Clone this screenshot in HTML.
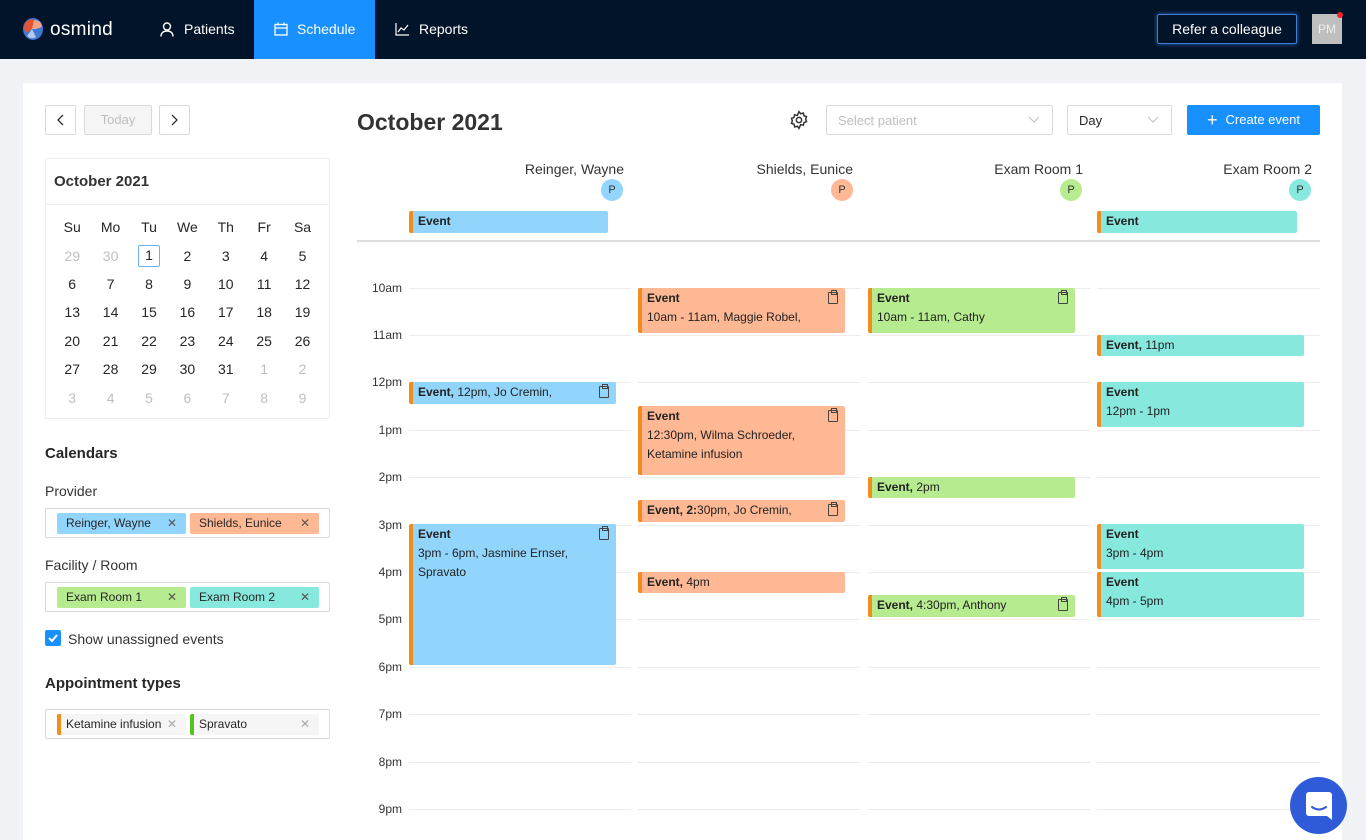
<!DOCTYPE html>
<html><head><meta charset="utf-8"><style>
*{box-sizing:border-box;margin:0;padding:0}
body{width:1366px;height:840px;overflow:hidden;background:#f0f2f5;font-family:"Liberation Sans",sans-serif;color:#262626;position:relative;font-size:13px}
.a{position:absolute}
.nav{left:0;top:0;width:1366px;height:59px;background:#021429}
.nav .it{position:absolute;top:0;height:59px;line-height:59px;color:#fff;font-size:14px}
.panel{left:23px;top:83px;width:1319px;height:757px;background:#fff}
.btn{border:1px solid #d9d9d9;border-radius:2px;background:#fff;height:30px;text-align:center;line-height:28px}
.cal td{width:38.4px;text-align:center;height:28.4px;font-size:14px;color:#262626}
.g{color:#bfbfbf!important}
.box{border:1px solid #d9d9d9;border-radius:2px;background:#fff}
.tag{position:absolute;top:4px;height:21px;line-height:21px;font-size:12px;padding-left:9px;border-radius:2px;width:129px}
.tag span{position:absolute;right:9px;top:0;color:#555}
.hl{height:1px;background:#ececec;position:absolute}
.tl{position:absolute;left:357px;width:45px;text-align:right;font-size:12px;color:#333}
.ev{position:absolute;border-left:4px solid #f28c1e;border-radius:2px;font-size:12px;padding:1px 0 0 5px;line-height:19px;color:#222}
.ev b{font-weight:bold}
.ic{position:absolute;right:7px;top:4px;width:10px;height:12px;border:1.3px solid #444;border-radius:1px}
.ic:before{content:"";position:absolute;left:1.5px;top:-3px;width:4px;height:3px;border:1.3px solid #444;background:inherit}
.b{background:#91d5fc}.o{background:#ffb894}.gr{background:#b7eb8f}.t{background:#87e8de}
.hd{position:absolute;font-size:14px;color:#333;text-align:right}
.pc{position:absolute;width:22px;height:22px;border-radius:11px;font-size:11px;text-align:center;line-height:22px;color:#333}
</style></head><body>
<div class="a nav">
 <svg class="a" style="left:22px;top:17px" width="22" height="24" viewBox="0 0 22 24"><ellipse cx="11" cy="12" rx="10" ry="11" fill="#3e79d6"/><path d="M3 6 Q8 1 12 3 L10 12 L4 16 Q1 11 3 6Z" fill="#e8542f"/><path d="M12 3 Q19 3 20 10 L14 12 L10 12Z" fill="#f3a287"/><path d="M10 12 L14 20 Q9 23 5 19Z" fill="#fff" opacity=".6"/></svg>
 <div class="it" style="left:50px;font-size:19px;letter-spacing:.3px">osmind</div>
 <svg class="a" style="left:160px;top:22px" width="14" height="15" viewBox="0 0 14 15" fill="none" stroke="#fff" stroke-width="1.4"><circle cx="7" cy="4.5" r="3.5"/><path d="M1 14.5c0-4 2.7-5.5 6-5.5s6 1.5 6 5.5"/></svg>
 <div class="it" style="left:184px">Patients</div>
 <div class="a" style="left:254px;top:0;width:121px;height:59px;background:#1890ff"></div>
 <svg class="a" style="left:274px;top:22px" width="14" height="14" viewBox="0 0 14 14" fill="none" stroke="#fff" stroke-width="1.3"><rect x="1" y="2.5" width="12" height="10.5"/><path d="M1 6h12M4 0.5v3M10 0.5v3"/></svg>
 <div class="it" style="left:297px">Schedule</div>
 <svg class="a" style="left:395px;top:23px" width="14" height="13" viewBox="0 0 14 13" fill="none" stroke="#fff" stroke-width="1.2"><path d="M1 0v12h13M3 9l3-4 3 2 4-5"/></svg>
 <div class="it" style="left:419px">Reports</div>
 <div class="a" style="left:1157px;top:14px;width:140px;height:30px;border:1px solid #3f7ed4;border-radius:2px;color:#fff;text-align:center;line-height:28px;font-size:14px;box-shadow:0 0 4px #2f6cc0">Refer a colleague</div>
 <div class="a" style="left:1312px;top:14px;width:30px;height:30px;background:#bfbfbf;color:#eee;font-size:12px;text-align:center;line-height:30px">PM</div>
 <div class="a" style="left:1337px;top:12px;width:6px;height:6px;border-radius:3px;background:#f5222d"></div>
</div>
<div class="a panel"></div>
<div class="a btn" style="left:45px;top:105px;width:31px"><svg width="29" height="28"><path d="M17 9l-5 5 5 5" stroke="#333" stroke-width="1.3" fill="none"/></svg></div>
<div class="a btn" style="left:84px;top:105px;width:68px;background:#f5f5f5;color:#bfbfbf;font-size:13px">Today</div>
<div class="a btn" style="left:159px;top:105px;width:31px"><svg width="29" height="28"><path d="M12 9l5 5-5 5" stroke="#333" stroke-width="1.3" fill="none"/></svg></div>
<div class="a box" style="left:45px;top:158px;width:285px;height:261px;border-color:#eee">
 <div style="height:46px;border-bottom:1px solid #eee;padding:14px 0 0 8px;font-size:15px;font-weight:bold;color:#333">October 2021</div>
 <table class="cal" style="border-collapse:collapse;margin:8px 0 0 7px">
 <tr><td>Su</td><td>Mo</td><td>Tu</td><td>We</td><td>Th</td><td>Fr</td><td>Sa</td></tr>
 <tr><td class="g">29</td><td class="g">30</td><td><span style="display:inline-block;width:22px;height:22px;border:1.5px solid #69b1ff;line-height:19px;border-radius:2px">1</span></td><td>2</td><td>3</td><td>4</td><td>5</td></tr>
 <tr><td>6</td><td>7</td><td>8</td><td>9</td><td>10</td><td>11</td><td>12</td></tr>
 <tr><td>13</td><td>14</td><td>15</td><td>16</td><td>17</td><td>18</td><td>19</td></tr>
 <tr><td>20</td><td>21</td><td>22</td><td>23</td><td>24</td><td>25</td><td>26</td></tr>
 <tr><td>27</td><td>28</td><td>29</td><td>30</td><td>31</td><td class="g">1</td><td class="g">2</td></tr>
 <tr><td class="g">3</td><td class="g">4</td><td class="g">5</td><td class="g">6</td><td class="g">7</td><td class="g">8</td><td class="g">9</td></tr>
 </table>
</div>
<div class="a" style="left:45px;top:445px;font-size:15px;font-weight:bold">Calendars</div>
<div class="a" style="left:45px;top:483px;font-size:14px;color:#333">Provider</div>
<div class="a box" style="left:45px;top:508px;width:285px;height:30px">
 <div class="tag b" style="left:11px">Reinger, Wayne<span>✕</span></div>
 <div class="tag o" style="left:144px">Shields, Eunice<span>✕</span></div>
</div>
<div class="a" style="left:45px;top:557px;font-size:14px;color:#333">Facility / Room</div>
<div class="a box" style="left:45px;top:582px;width:285px;height:30px">
 <div class="tag gr" style="left:11px">Exam Room 1<span>✕</span></div>
 <div class="tag t" style="left:144px">Exam Room 2<span>✕</span></div>
</div>
<div class="a" style="left:45px;top:630px;width:16px;height:16px;background:#1890ff;border-radius:2px"><svg width="16" height="16"><path d="M4 8l3 3 5-6" stroke="#fff" stroke-width="2" fill="none"/></svg></div>
<div class="a" style="left:68px;top:631px;font-size:14px;color:#333">Show unassigned events</div>
<div class="a" style="left:45px;top:675px;font-size:15px;font-weight:bold">Appointment types</div>
<div class="a box" style="left:45px;top:709px;width:285px;height:30px">
 <div class="tag" style="left:11px;background:#f5f5f5;border-left:4px solid #f28c1e;padding-left:5px">Ketamine infusion<span style="color:#aaa">✕</span></div>
 <div class="tag" style="left:144px;background:#f5f5f5;border-left:4px solid #52c41a;padding-left:5px">Spravato<span style="color:#aaa">✕</span></div>
</div>

<div class="a" style="left:357px;top:109px;font-size:23px;font-weight:bold;color:#333">October 2021</div>
<svg class="a" style="left:789px;top:110px" width="20" height="20" viewBox="0 0 24 24" fill="none" stroke="#333" stroke-width="1.8"><circle cx="12" cy="12" r="3.2"/><path d="M12 2l2 2.5 3.2-.8.8 3.2L21 8l-1 3 1 3-3 1.1-.8 3.2-3.2-.8L12 22l-2-2.5-3.2.8-.8-3.2L3 16l1-3-1-3 3-1.1.8-3.2 3.2.8Z"/></svg>
<div class="a box" style="left:826px;top:105px;width:227px;height:30px;color:#bfbfbf;font-size:13px;padding:7px 11px">Select patient<svg class="a" style="right:12px;top:10px" width="12" height="8"><path d="M1 1l5 5 5-5" stroke="#bfbfbf" fill="none"/></svg></div>
<div class="a box" style="left:1067px;top:105px;width:105px;height:30px;font-size:13px;padding:7px 11px">Day<svg class="a" style="right:12px;top:10px" width="12" height="8"><path d="M1 1l5 5 5-5" stroke="#bfbfbf" fill="none"/></svg></div>
<div class="a" style="left:1187px;top:105px;width:133px;height:30px;background:#1890ff;border-radius:2px;color:#fff;font-size:13px;line-height:30px;text-align:center"><span style="font-size:18px;vertical-align:-2px;margin-right:8px">+</span>Create event</div>

<div class="hd" style="left:409px;width:215px;top:161px">Reinger, Wayne</div>
<div class="pc b" style="left:601px;top:179px">P</div>
<div class="hd" style="left:638px;width:215px;top:161px">Shields, Eunice</div>
<div class="pc o" style="left:831px;top:179px">P</div>
<div class="hd" style="left:868px;width:215px;top:161px">Exam Room 1</div>
<div class="pc gr" style="left:1060px;top:179px">P</div>
<div class="hd" style="left:1097px;width:215px;top:161px">Exam Room 2</div>
<div class="pc t" style="left:1289px;top:179px">P</div>
<div class="ev b" style="left:409px;top:211px;width:199px;height:22px"><b>Event</b></div>
<div class="ev t" style="left:1097px;top:211px;width:200px;height:22px"><b>Event</b></div>
<div class="a" style="left:357px;top:240px;width:963px;height:2px;background:#ddd"></div>

<div class="tl" style="top:281px">10am</div><div class="tl" style="top:328px">11am</div><div class="tl" style="top:375px">12pm</div><div class="tl" style="top:423px">1pm</div><div class="tl" style="top:470px">2pm</div><div class="tl" style="top:518px">3pm</div><div class="tl" style="top:565px">4pm</div><div class="tl" style="top:612px">5pm</div><div class="tl" style="top:660px">6pm</div><div class="tl" style="top:707px">7pm</div><div class="tl" style="top:755px">8pm</div><div class="tl" style="top:802px">9pm</div>
<div class="hl" style="left:409px;width:222px;top:288px"></div><div class="hl" style="left:638px;width:222px;top:288px"></div><div class="hl" style="left:868px;width:222px;top:288px"></div><div class="hl" style="left:1097px;width:223px;top:288px"></div>
<div class="hl" style="left:409px;width:222px;top:335px"></div><div class="hl" style="left:638px;width:222px;top:335px"></div><div class="hl" style="left:868px;width:222px;top:335px"></div><div class="hl" style="left:1097px;width:223px;top:335px"></div>
<div class="hl" style="left:409px;width:222px;top:382px"></div><div class="hl" style="left:638px;width:222px;top:382px"></div><div class="hl" style="left:868px;width:222px;top:382px"></div><div class="hl" style="left:1097px;width:223px;top:382px"></div>
<div class="hl" style="left:409px;width:222px;top:430px"></div><div class="hl" style="left:638px;width:222px;top:430px"></div><div class="hl" style="left:868px;width:222px;top:430px"></div><div class="hl" style="left:1097px;width:223px;top:430px"></div>
<div class="hl" style="left:409px;width:222px;top:477px"></div><div class="hl" style="left:638px;width:222px;top:477px"></div><div class="hl" style="left:868px;width:222px;top:477px"></div><div class="hl" style="left:1097px;width:223px;top:477px"></div>
<div class="hl" style="left:409px;width:222px;top:525px"></div><div class="hl" style="left:638px;width:222px;top:525px"></div><div class="hl" style="left:868px;width:222px;top:525px"></div><div class="hl" style="left:1097px;width:223px;top:525px"></div>
<div class="hl" style="left:409px;width:222px;top:572px"></div><div class="hl" style="left:638px;width:222px;top:572px"></div><div class="hl" style="left:868px;width:222px;top:572px"></div><div class="hl" style="left:1097px;width:223px;top:572px"></div>
<div class="hl" style="left:409px;width:222px;top:619px"></div><div class="hl" style="left:638px;width:222px;top:619px"></div><div class="hl" style="left:868px;width:222px;top:619px"></div><div class="hl" style="left:1097px;width:223px;top:619px"></div>
<div class="hl" style="left:409px;width:222px;top:667px"></div><div class="hl" style="left:638px;width:222px;top:667px"></div><div class="hl" style="left:868px;width:222px;top:667px"></div><div class="hl" style="left:1097px;width:223px;top:667px"></div>
<div class="hl" style="left:409px;width:222px;top:714px"></div><div class="hl" style="left:638px;width:222px;top:714px"></div><div class="hl" style="left:868px;width:222px;top:714px"></div><div class="hl" style="left:1097px;width:223px;top:714px"></div>
<div class="hl" style="left:409px;width:222px;top:762px"></div><div class="hl" style="left:638px;width:222px;top:762px"></div><div class="hl" style="left:868px;width:222px;top:762px"></div><div class="hl" style="left:1097px;width:223px;top:762px"></div>
<div class="hl" style="left:409px;width:222px;top:809px"></div><div class="hl" style="left:638px;width:222px;top:809px"></div><div class="hl" style="left:868px;width:222px;top:809px"></div><div class="hl" style="left:1097px;width:223px;top:809px"></div>

<div class="ev b" style="left:409px;top:382px;width:207px;height:22px"><b>Event,</b> 12pm, Jo Cremin,<i class="ic"></i></div>
<div class="ev b" style="left:409px;top:524px;width:207px;height:141px"><b>Event</b><br>3pm - 6pm, Jasmine Ernser,<br>Spravato<i class="ic"></i></div>
<div class="ev o" style="left:638px;top:288px;width:207px;height:45px"><b>Event</b><br>10am - 11am, Maggie Robel,<i class="ic"></i></div>
<div class="ev o" style="left:638px;top:406px;width:207px;height:69px"><b>Event</b><br>12:30pm, Wilma Schroeder,<br>Ketamine infusion<i class="ic"></i></div>
<div class="ev o" style="left:638px;top:500px;width:207px;height:22px"><b>Event, 2:</b>30pm, Jo Cremin,<i class="ic"></i></div>
<div class="ev o" style="left:638px;top:572px;width:207px;height:21px"><b>Event,</b> 4pm</div>
<div class="ev gr" style="left:868px;top:288px;width:207px;height:45px"><b>Event</b><br>10am - 11am, Cathy<i class="ic"></i></div>
<div class="ev gr" style="left:868px;top:477px;width:207px;height:21px"><b>Event,</b> 2pm</div>
<div class="ev gr" style="left:868px;top:595px;width:207px;height:22px"><b>Event,</b> 4:30pm, Anthony<i class="ic"></i></div>
<div class="ev t" style="left:1097px;top:335px;width:207px;height:21px"><b>Event,</b> 11pm</div>
<div class="ev t" style="left:1097px;top:382px;width:207px;height:45px"><b>Event</b><br>12pm - 1pm</div>
<div class="ev t" style="left:1097px;top:524px;width:207px;height:45px"><b>Event</b><br>3pm - 4pm</div>
<div class="ev t" style="left:1097px;top:572px;width:207px;height:45px"><b>Event</b><br>4pm - 5pm</div>

<div class="a" style="left:1290px;top:777px;width:57px;height:57px;border-radius:29px;background:#2f5bd9">
 <svg class="a" style="left:16px;top:15px" width="26" height="28" viewBox="0 0 26 28"><path d="M3 0h20a3 3 0 0 1 3 3v25l-5-4H3a3 3 0 0 1-3-3V3a3 3 0 0 1 3-3Z" fill="#fff"/><path d="M6 15q7 5 14 0" stroke="#2f5bd9" stroke-width="2" fill="none" stroke-linecap="round"/></svg>
</div>
</body></html>
